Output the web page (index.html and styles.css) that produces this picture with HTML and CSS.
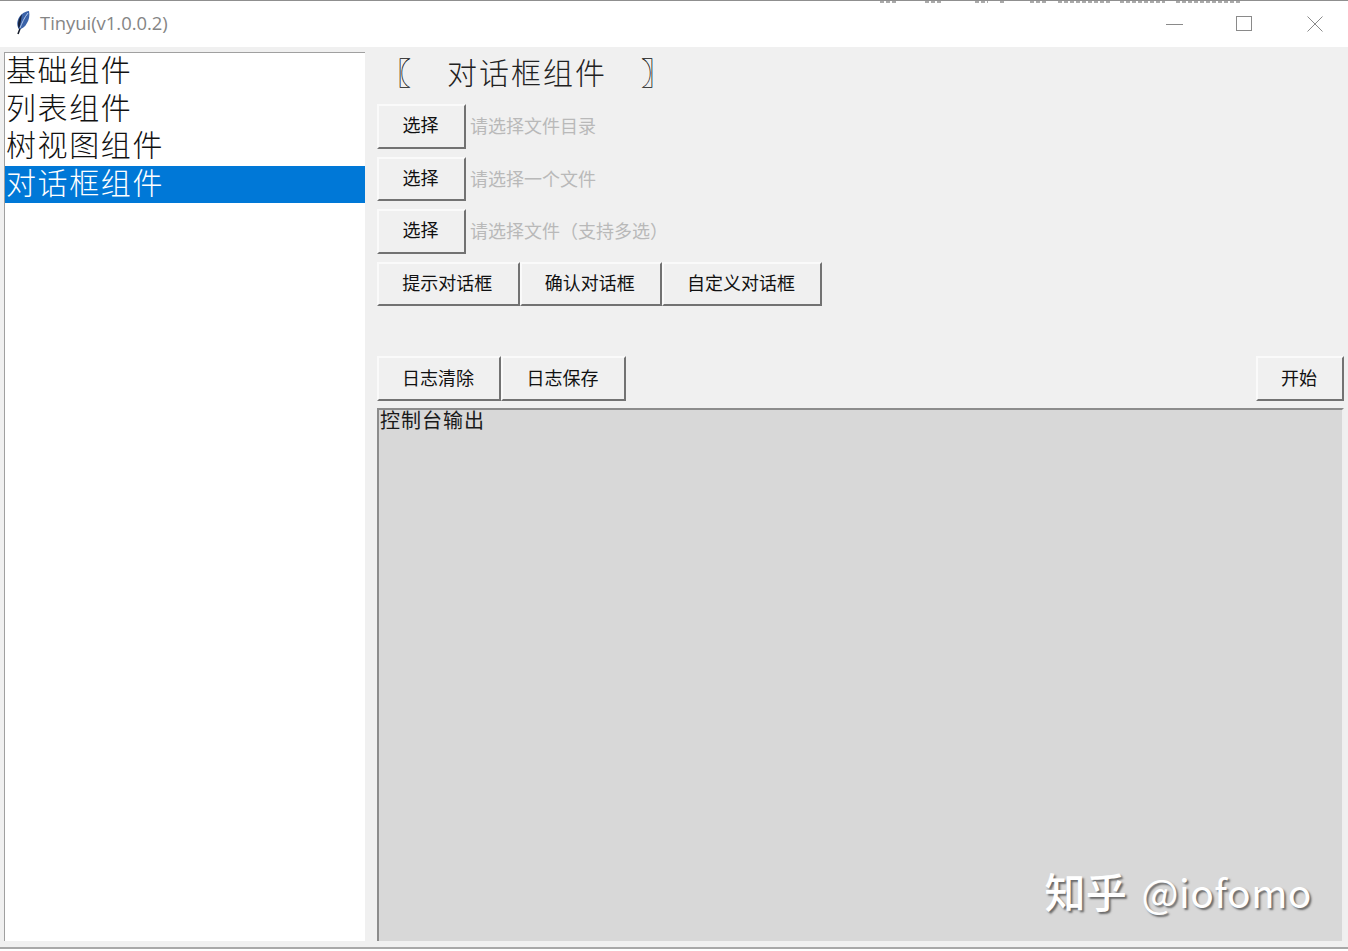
FILE: index.html
```html
<!DOCTYPE html>
<html lang="zh">
<head>
<meta charset="utf-8">
<title>Tinyui(v1.0.0.2)</title>
<link rel="stylesheet" href="styles.css">
</head>
<body>
<div class="window">
  <header class="titlebar">
    <svg class="sliver" viewBox="0 0 360 3" width="360" height="3"><path d="M0 1H16M45 1H62M95 1H108M120 1H126M150 1H166M178 1H230M240 1H285M296 1H360" stroke="#8f8f8f" stroke-width="1.5" stroke-dasharray="4 2" fill="none"/></svg>
    <svg class="feather" viewBox="0 0 16 24" width="16" height="24">
      <path d="M3 23 L6 15" stroke="#141a28" stroke-width="1.6" fill="none"/>
      <path d="M4 18 C1 14 2 8 6 4 C9 1 12 0 14 0 C15 4 14 9 12 12 C10 16 7 18 4 18 Z" fill="#3a62a8"/>
      <path d="M4 18 C2 14 3 8 7 3 C6 8 6 12 4 18 Z" fill="#16213c"/>
      <path d="M5 17 C7 12 9 7 13 2" stroke="#b4c8ea" stroke-width="1" fill="none"/>
    </svg>
    <span class="app-title">Tinyui(v1.0.0.2)</span>
    <div class="controls">
      <svg class="ctl ctl-min" viewBox="0 0 18 16" width="18" height="16"><path d="M0 8.5H17" stroke="#8a8a8a" fill="none"/></svg>
      <svg class="ctl ctl-max" viewBox="0 0 16 16" width="16" height="16"><rect x="0.5" y="0.5" width="15" height="14" stroke="#8a8a8a" fill="none"/></svg>
      <svg class="ctl ctl-close" viewBox="0 0 16 16" width="16" height="16"><path d="M0.5 0.5L15.5 15.5M15.5 0.5L0.5 15.5" stroke="#8a8a8a" fill="none"/></svg>
    </div>
  </header>
  <main class="content">
    <ul class="list">
      <li class="item">基础组件</li>
      <li class="item">列表组件</li>
      <li class="item">树视图组件</li>
      <li class="item selected">对话框组件</li>
    </ul>
    <section class="panel">
      <h1 class="heading"><span class="bracket">〖</span><span class="heading-text">对话框组件</span><span class="bracket bracket-end">〗</span></h1>
      <div class="row"><button class="btn w-select">选择</button><span class="hint">请选择文件目录</span></div>
      <div class="row"><button class="btn w-select">选择</button><span class="hint">请选择一个文件</span></div>
      <div class="row"><button class="btn w-select">选择</button><span class="hint">请选择文件（支持多选）</span></div>
      <div class="row"><button class="btn w-five">提示对话框</button><button class="btn w-five">确认对话框</button><button class="btn w-six">自定义对话框</button></div>
      <div class="row row-log"><button class="btn w-four">日志清除</button><button class="btn w-save">日志保存</button><button class="btn w-select push">开始</button></div>
      <div class="console">
        控制台输出
        <div class="watermark"><span class="wm-cjk">知乎</span> @iofomo</div>
      </div>
    </section>
  </main>
  <footer class="edge"></footer>
</div>
</body>
</html>
```
FILE: styles.css
```css
* { box-sizing: border-box; }
html, body { margin: 0; height: 100%; }
body { background: #f0f0f0; font-family: "Noto Sans CJK SC", "Liberation Sans", sans-serif; overflow: hidden; }
.window { width: 1348px; height: 951px; display: flex; flex-direction: column; background: #f0f0f0; }
.titlebar { position: relative; height: 47px; flex: none; background: #fff; border-top: 1px solid #8f8f8f; display: flex; align-items: center; padding-left: 15px; }
.sliver { position: absolute; left: 880px; top: 0; }
.feather { flex: none; margin-bottom: 2px; }
.app-title { margin-left: 9px; font: 18.4px "Open Sans", sans-serif; color: #858585; margin-bottom: 3px; }
.controls { margin-left: auto; display: flex; align-items: center; padding-right: 25px; margin-bottom: 1px; }
.ctl { display: block; }
.ctl-min { margin-right: 52px; }
.ctl-max { margin-right: 55px; }
.content { flex: 1; display: flex; padding: 5px 4px 6px 4px; min-height: 0; }
.list { width: 361px; flex: none; margin: 0; padding: 0; list-style: none; background: #fff; border-top: 1px solid #a0a0a0; border-left: 1px solid #a0a0a0; font-size: 30px; font-weight: 300; letter-spacing: 1.6px; color: #111; }
.item { height: 37.6px; line-height: 30px; padding-left: 1px; white-space: nowrap; }
.selected { background: #0078d7; color: #fff; }
.panel { flex: 1; margin-left: 12px; display: flex; flex-direction: column; min-width: 0; }
.heading { margin: 0; height: 52px; display: flex; align-items: flex-start; font-size: 30px; line-height: 38px; font-weight: 300; letter-spacing: 2px; color: #222; padding-left: 4px; }
.bracket { font-weight: 500; color: #111; }
.heading-text { margin-left: 34px; }
.bracket-end { margin-left: 34px; }
.row { display: flex; height: 44.5px; margin-bottom: 8px; align-items: stretch; }
.row-log { margin: 42px 0 7px; height: 45px; }
.btn { flex: none; padding: 0 2px 4px 0; background: #f0f0f0; border: 2px solid; border-color: #fafafa #727272 #727272 #fafafa; font: 400 18px "Noto Sans CJK SC", sans-serif; color: #111; }
.w-select { width: 89px; }
.w-five { width: 142.5px; }
.w-six { width: 160px; }
.w-four { width: 124px; }
.w-save { width: 125px; }
.push { margin-left: auto; width: 88px; }
.hint { margin-left: 4px; margin-bottom: 2px; align-self: center; font-size: 18px; color: #b9b9b9; }
.console { flex: 1; position: relative; background: #d8d8d8; border-top: 2px solid #8c8c8c; border-left: 2px solid #8c8c8c; border-right: 2px solid #efefef; padding-left: 1px; font-size: 20px; line-height: 19px; letter-spacing: 1px; color: #1a1a1a; }
.watermark { position: absolute; right: 30px; bottom: 25px; font: 39px "Noto Sans CJK SC", "Open Sans", sans-serif; letter-spacing: 0.5px; color: #fff; text-shadow: 2px 2px 2px #6a6a6a; line-height: 50px; white-space: nowrap; }
.wm-cjk { font-size: 41px; font-weight: 500; margin-right: 5px; }
.edge { height: 4px; flex: none; background: #fff; border-top: 2px solid #a8a8a8; }
```
